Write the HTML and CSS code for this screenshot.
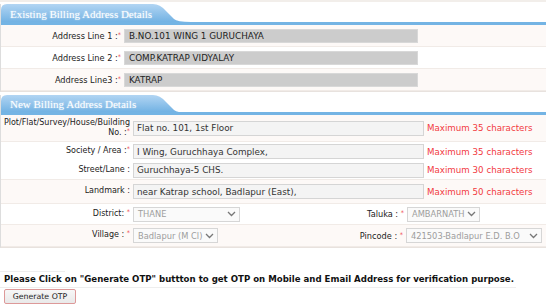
FILE: index.html
```html
<!DOCTYPE html>
<html lang="en">
  <head>
    <meta charset="UTF-8" />
    <title>Billing Address</title>
    <link rel="stylesheet" href="styles.css">
  </head>
  <body>
    <div class="topline"></div>

    <div class="panel">
      <div class="tab-head"><div class="tab">Existing Billing Address Details</div></div>
      <div class="row odd">
        <div class="lbl">Address Line 1 :<span class="req">*</span></div>
        <div class="ro">B.NO.101 WING 1 GURUCHAYA</div>
      </div>
      <div class="row">
        <div class="lbl">Address Line 2 :<span class="req">*</span></div>
        <div class="ro">COMP.KATRAP VIDYALAY</div>
      </div>
      <div class="row odd">
        <div class="lbl">Address Line3 :<span class="req">*</span></div>
        <div class="ro">KATRAP</div>
      </div>
    </div>

    <div class="panel second">
      <div class="tab-head"><div class="tab">New Billing Address Details</div></div>
      <div class="row odd tall">
        <div class="lbl wide"><span>Plot/Flat/Survey/House/Building</span><br><span>No. :</span><span class="req">*</span></div>
        <input class="txt" type="text" value="Flat no. 101, 1st Floor">
        <span class="hint">Maximum 35 characters</span>
      </div>
      <div class="row plain">
        <div class="lbl wide">Society / Area :<span class="req">*</span></div>
        <input class="txt" type="text" value="I Wing, Guruchhaya Complex,">
        <span class="hint">Maximum 35 characters</span>
      </div>
      <div class="row short">
        <div class="lbl wide">Street/Lane :</div>
        <input class="txt" type="text" value="Guruchhaya-5 CHS.">
        <span class="hint">Maximum 30 characters</span>
      </div>
      <div class="row odd mid">
        <div class="lbl wide">Landmark :</div>
        <input class="txt" type="text" value="near Katrap school, Badlapur (East),">
        <span class="hint">Maximum 50 characters</span>
      </div>
      <div class="row short2">
        <div class="lbl wide">District: <span class="req">*</span></div>
        <div class="sel w107">THANE<svg width="9" height="6" viewBox="0 0 9 6"><polyline points="1,1 4.5,4.5 8,1" fill="none" stroke="#777" stroke-width="1.3"/></svg></div>
        <div class="lbl right">Taluka : <span class="req">*</span></div>
        <div class="sel w73">AMBARNATH<svg width="9" height="6" viewBox="0 0 9 6"><polyline points="1,1 4.5,4.5 8,1" fill="none" stroke="#777" stroke-width="1.3"/></svg></div>
      </div>
      <div class="row odd">
        <div class="lbl wide">Village : <span class="req">*</span></div>
        <div class="sel w85">Badlapur (M Cl)<svg width="9" height="6" viewBox="0 0 9 6"><polyline points="1,1 4.5,4.5 8,1" fill="none" stroke="#777" stroke-width="1.3"/></svg></div>
        <div class="lbl right pin">Pincode : <span class="req">*</span></div>
        <div class="sel w136">421503-Badlapur E.D. B.O<svg width="9" height="6" viewBox="0 0 9 6"><polyline points="1,1 4.5,4.5 8,1" fill="none" stroke="#777" stroke-width="1.3"/></svg></div>
      </div>
    </div>

    <div class="gapline"></div>
    <p class="msg">Please Click on "Generate OTP" buttton to get OTP on Mobile and Email Address for verification purpose.</p>
    <button class="otp">Generate OTP</button>
  </body>
</html>
```

FILE: styles.css
```css
body {
  margin: 0;
  width: 546px;
  font-family: "DejaVu Sans", Verdana, sans-serif;
  font-size: 8.2px;
  color: #222;
  background: #fff;
}

.topline {
  height: 2px;
  background: #f2eeea;
  margin-bottom: 2px;
}

.panel {
  border-left: 1px solid #ddd;
  border-bottom: 1px solid #e8e2de;
}
.second {
  margin-top: 3px;
}
.second .tab-head {
  height: 17px;
}
.second .tab {
  height: 17px;
  padding-top: 1px;
}

.tab-head {
  height: 18px;
  border-bottom: 3px solid #74b4e4;
}
.tab {
  width: 190px;
  height: 18px;
  box-sizing: border-box;
  padding: 2px 0 0 9px;
  font-family: "Liberation Serif", "Times New Roman", serif;
  font-size: 11px;
  line-height: 16px;
  color: #fff;
  text-shadow: 0 0 2px rgba(255,255,255,0.6);
  background: linear-gradient(#b2d5f3, #72b2e3);
  clip-path: path('M0,18 L0,6 Q0,0 6,0 L152,0 Q159,0 165,7 L173,15 Q176,18 190,18 Z');
}

.row {
  display: flex;
  align-items: center;
  height: 21px;
  border-bottom: 1px solid #f1ebe7;
  background: #fff;
}
.row.odd {
  background: #fdf9f7;
}
.row.plain {
  border-bottom: none;
  height: 19px;
}
.row.short {
  height: 18px;
}
.row.short2 {
  height: 20px;
}
.row.tall {
  height: 26px;
}
.row.mid {
  height: 23px;
}

.lbl {
  width: 120px;
  padding-right: 3px;
  text-align: right;
  flex-shrink: 0;
  white-space: nowrap;
}
.lbl.wide {
  width: 129px;
  padding-right: 3px;
  font-size: 8px;
  line-height: 10.5px;
}
.lbl.right {
  width: 155px;
  margin-left: 9px;
  padding-right: 3px;
}
.lbl.pin {
  margin-left: 30px;
  width: 155px;
}
.req {
  color: #e44;
  font-size: 6.5px;
  line-height: 1;
  vertical-align: 2px;
}

.ro {
  width: 294px;
  height: 14px;
  box-sizing: border-box;
  padding-left: 4px;
  background: #cccccc;
  border: 1px solid #d8d8d8;
  font-size: 8.8px;
  line-height: 12px;
  color: #222;
}

.txt {
  width: 291px;
  height: 15px;
  box-sizing: border-box;
  margin: 0;
  padding: 0 0 0 3px;
  border: 1px solid #d5d5d5;
  background: #f4f4f4;
  font-family: "DejaVu Sans", Verdana, sans-serif;
  font-size: 8.8px;
  color: #333;
  outline: none;
}

.hint {
  margin-left: 3px;
  color: #f2393f;
  font-size: 8.7px;
  white-space: nowrap;
}

.sel {
  display: flex;
  align-items: center;
  justify-content: space-between;
  height: 15px;
  box-sizing: border-box;
  padding: 0 3px 0 4px;
  border: 1px solid #d6d6d6;
  background: #fafafa;
  color: #9d9d9d;
  font-size: 8.3px;
  white-space: nowrap;
  overflow: hidden;
}
.w107 { width: 107px; }
.w73 { width: 73px; }
.w85 { width: 85px; }
.w136 { width: 136px; }

.gapline {
  width: 65px;
  height: 1px;
  margin-top: 23px;
  background: #eee;
}

.msg {
  margin: 2px 0 0 0;
  padding: 0 0 2px 4px;
  width: 512px;
  border-bottom: 1px solid #eee;
  font-weight: bold;
  font-size: 8.6px;
  line-height: 11px;
  color: #111;
}

.otp {
  display: block;
  margin: 1px 0 0 4px;
  width: 72px;
  height: 15px;
  padding: 0;
  border: 1px solid #d99;
  border-radius: 2px;
  background: linear-gradient(#f7f7f7, #e9e9e9);
  font-family: "DejaVu Sans", Verdana, sans-serif;
  font-size: 7.8px;
  color: #222;
}
```
